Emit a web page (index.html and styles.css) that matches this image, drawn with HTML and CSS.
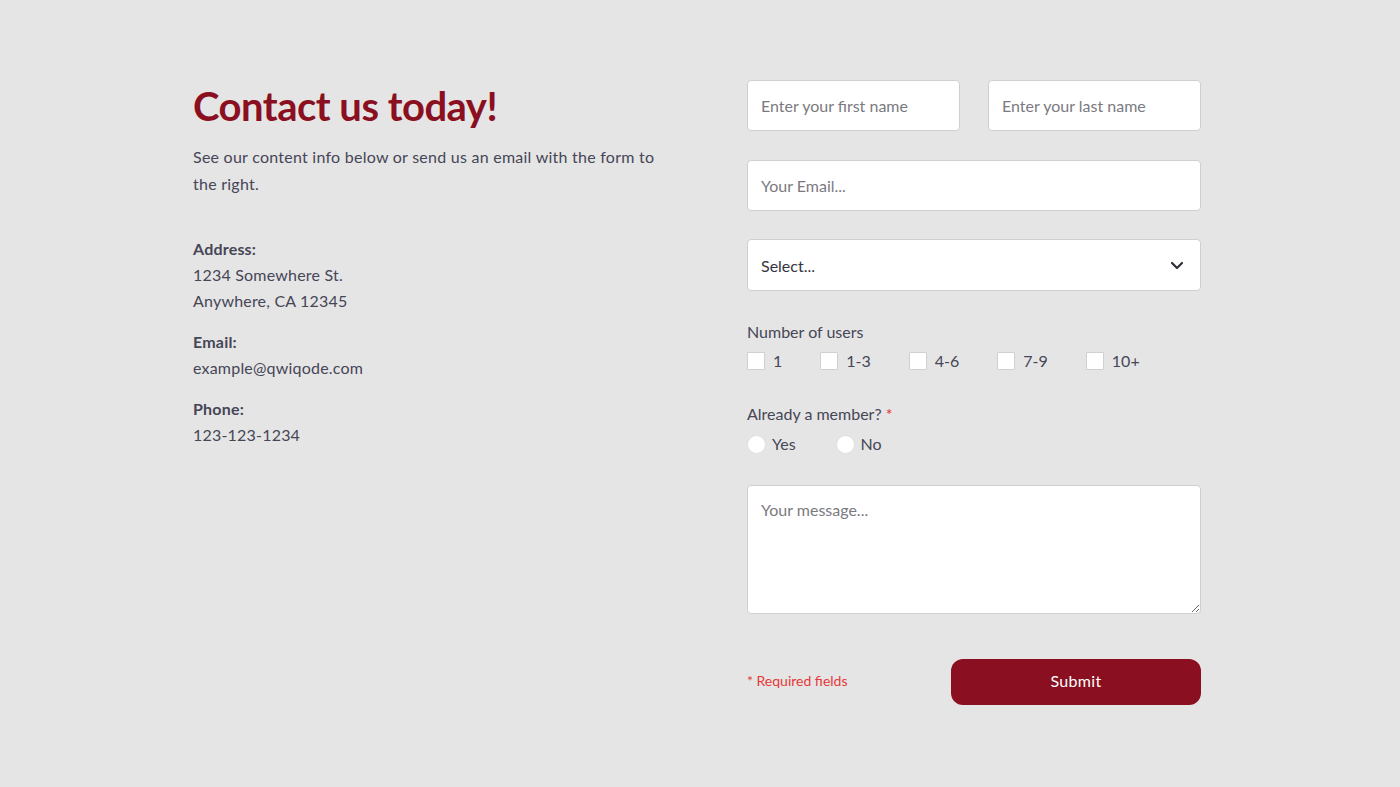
FILE: index.html
```html
<!DOCTYPE html>
<html lang="en">
<head>
<meta charset="utf-8">
<title>Contact us</title>
<link rel="stylesheet" href="styles.css">
</head>
<body>
<main class="page">
  <section class="info">
    <h1 class="title">Contact us today!</h1>
    <p class="lead">See our content info below or send us an email with the form to the right.</p>
    <div class="block">
      <div class="label">Address:</div>
      <div class="value">1234 Somewhere St.</div>
      <div class="value">Anywhere, CA 12345</div>
    </div>
    <div class="block">
      <div class="label">Email:</div>
      <div class="value">example@qwiqode.com</div>
    </div>
    <div class="block">
      <div class="label">Phone:</div>
      <div class="value">123-123-1234</div>
    </div>
  </section>
  <form class="form">
    <div class="row">
      <input class="field" type="text" placeholder="Enter your first name">
      <input class="field" type="text" placeholder="Enter your last name">
    </div>
    <input class="field" type="email" placeholder="Your Email...">
    <div class="select">
      <span>Select...</span>
      <svg class="chev" width="14" height="9" viewBox="0 0 14 9"><path d="M2 2 L7 7 L12 2" fill="none" stroke="#2f2f38" stroke-width="2.2" stroke-linecap="round" stroke-linejoin="round"/></svg>
    </div>
    <div class="group">
      <div class="glabel">Number of users</div>
      <div class="opts checks">
        <label class="opt"><input type="checkbox" class="box"><span>1</span></label>
        <label class="opt"><input type="checkbox" class="box"><span>1-3</span></label>
        <label class="opt"><input type="checkbox" class="box"><span>4-6</span></label>
        <label class="opt"><input type="checkbox" class="box"><span>7-9</span></label>
        <label class="opt"><input type="checkbox" class="box"><span>10+</span></label>
      </div>
    </div>
    <div class="group group2">
      <div class="glabel">Already a member? <span class="req">*</span></div>
      <div class="opts radios">
        <label class="opt"><input type="radio" name="m" class="radio"><span>Yes</span></label>
        <label class="opt"><input type="radio" name="m" class="radio"><span>No</span></label>
      </div>
    </div>
    <textarea class="field area" placeholder="Your message..."></textarea>
    <div class="foot">
      <span class="reqnote">* Required fields</span>
      <button type="button" class="submit">Submit</button>
    </div>
  </form>
</main>
</body>
</html>
```

FILE: styles.css
```css
* { box-sizing: border-box; }
html, body { margin: 0; padding: 0; }
body {
  background: #e5e5e5;
  font-family: Lato, "Open Sans", sans-serif;
  color: #464657;
  width: 1400px;
  height: 787px;
  overflow: hidden;
}
.page {
  display: flex;
  padding: 80px 0 0 193px;
}
.info {
  width: 554px;
  padding-top: 2px;
}
.title {
  margin: 0;
  font-size: 40px;
  line-height: 48px;
  font-weight: 700;
  color: #8a1021;
  letter-spacing: -0.5px;
}
.lead {
  margin: 13px 0 0;
  width: 480px;
  font-size: 16px;
  line-height: 27px;
  letter-spacing: 0.25px;
  color: #464657;
}
.block {
  margin-top: 15.5px;
  font-size: 16px;
  line-height: 25.8px;
  letter-spacing: 0.2px;
}
.block:first-of-type { margin-top: 39px; }
.label { font-weight: 700; }
.form {
  width: 454px;
  display: flex;
  flex-direction: column;
}
.row {
  display: flex;
  gap: 28px;
}
.field {
  display: block;
  width: 100%;
  height: 51px;
  border: 1px solid #cfcfcf;
  border-radius: 4px;
  background: #fff;
  padding: 0 13px;
  font-family: inherit;
  font-size: 16px;
  color: #464657;
  outline: none;
}
.field::placeholder { color: #7a7a80; }
.form > .field { margin-top: 29px; }
.select {
  margin-top: 28px;
  height: 52px;
  border: 1px solid #cfcfcf;
  border-radius: 4px;
  background: #fff;
  display: flex;
  align-items: center;
  justify-content: space-between;
  padding: 0 16px 0 13px;
  font-size: 16px;
  color: #35353f;
}
.chev { display: block; }
.group { margin-top: 30px; }
.group2 { margin-top: 32px; }
.glabel {
  font-size: 16px;
  line-height: 22px;
  color: #464657;
}
.req { color: #e32b2b; }
.opts {
  display: flex;
  margin-top: 8px;
}
.checks { gap: 38px; }
.radios { gap: 40px; margin-top: 9px; }
.opt {
  display: flex;
  align-items: center;
  gap: 8px;
  font-size: 16px;
  line-height: 20px;
  color: #464657;
}
.box, .radio {
  appearance: none;
  -webkit-appearance: none;
  margin: 0;
  background: #fff;
  flex: none;
}
.box {
  width: 18px;
  height: 18px;
  border: 1px solid #d0d0d0;
  border-radius: 1px;
}
.radio {
  width: 19px;
  height: 19px;
  border-radius: 50%;
  border: 1px solid #e0e0e0;
  margin-right: -2px;
}
.form > .area {
  margin-top: 31px;
  height: 129px;
  padding: 12px 13px;
  resize: vertical;
  line-height: 24px;
}
.foot {
  margin-top: 45px;
  display: flex;
  align-items: center;
  justify-content: space-between;
}
.reqnote {
  font-size: 14px;
  color: #e53838;
  padding-bottom: 4px;
}
.submit {
  width: 250px;
  height: 46px;
  border: none;
  border-radius: 12px;
  background: #8a0f20;
  color: #fff;
  font-family: inherit;
  font-weight: 400;
  font-size: 16px;
  letter-spacing: 0.3px;
  padding: 0 0 3px;
}
```
